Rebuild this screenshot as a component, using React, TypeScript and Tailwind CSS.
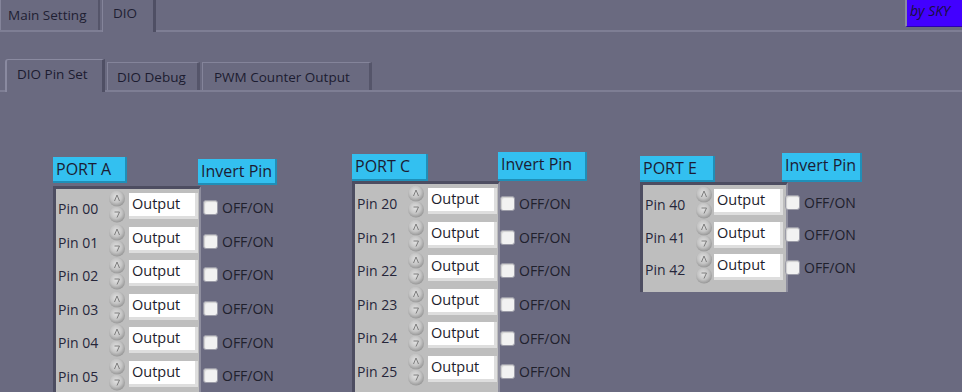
import React from 'react';

type Port = {
  name: string;
  pins: string[];
  wrap: string;
  col1: string;
  col2: string;
  nameBox: string;
  invertBox: string;
  boxGap: string;
  checkPad: string;
  rowH: string;
};

const PORTS: Port[] = [
  {
    name: 'PORT A',
    pins: ['00', '01', '02', '03', '04', '05'],
    wrap: 'ml-[53px] mt-[65px]',
    col1: 'w-[145px]',
    col2: 'w-[80px]',
    nameBox: 'w-[74px] h-[26px]',
    invertBox: 'w-[79px] h-[26px] mt-[2px]',
    boxGap: 'ml-[3px]',
    checkPad: 'pl-[5px] pt-[5px]',
    rowH: 'h-[33.6px]',
  },
  {
    name: 'PORT C',
    pins: ['20', '21', '22', '23', '24', '25'],
    wrap: 'ml-[74px] mt-[60px]',
    col1: 'w-[146px]',
    col2: 'w-[90px]',
    nameBox: 'w-[76px] h-[27px] mt-[2px]',
    invertBox: 'w-[89px] h-[29px]',
    boxGap: 'ml-[3px]',
    checkPad: 'pl-[2px] pt-[6px]',
    rowH: 'h-[33.6px]',
  },
  {
    name: 'PORT E',
    pins: ['40', '41', '42'],
    wrap: 'ml-[52px] mt-[61px]',
    col1: 'w-[142px]',
    col2: 'w-[80px]',
    nameBox: 'w-[75px] h-[26px] mt-[3px]',
    invertBox: 'w-[80px] h-[29px]',
    boxGap: 'ml-[1px]',
    checkPad: 'pl-[3px] pt-[4px]',
    rowH: 'h-[32.5px]',
  },
];

const Spinner: React.FC = () => (
  <svg width="18" height="33" viewBox="0 0 18 33" className="shrink-0 self-start">
    <defs>
      <radialGradient id="spg" cx="45%" cy="40%" r="65%">
        <stop offset="0%" stopColor="#e2e2e2" />
        <stop offset="55%" stopColor="#c4c4c4" />
        <stop offset="100%" stopColor="#8e8e8e" />
      </radialGradient>
    </defs>
    <ellipse cx="9" cy="8.5" rx="8" ry="8" fill="url(#spg)" />
    <ellipse cx="9" cy="24.5" rx="8" ry="8" fill="url(#spg)" />
    <path d="M6.5 11 L9 5 L11.5 11" fill="none" stroke="#7c7c7c" strokeWidth="1" />
    <path d="M6.5 22 L11.5 22 L9 27.5" fill="none" stroke="#7c7c7c" strokeWidth="1" />
  </svg>
);

const PortGroup: React.FC<{ port: Port }> = ({ port }) => (
  <div className={`${port.wrap} flex shrink-0`}>
    <div className={`${port.col1} flex flex-col`}>
      <div className="h-[29px] flex items-start">
        <div
          className={`${port.nameBox} bg-[#33c0f0] border-b-2 border-r-2 border-[#1f8fb8] text-[16px] leading-[24px] pl-[3px] text-[#1c1c34]`}
        >
          {port.name}
        </div>
      </div>
      <div className="w-[148px] bg-[#bebebe] border-l-[3px] border-t-[3px] border-[#4d4d61] border-r-2 border-r-[#8e8e9e] pt-[1px] pb-[8px]">
        {port.pins.map((p) => (
          <div key={p} className={`${port.rowH} flex items-start`}>
            <span className="w-[52px] pl-[2px] pt-[8px] text-[14px] text-[#26263a]">Pin {p}</span>
            <Spinner />
            <div
              className={`${port.boxGap} mt-[3px] w-[69px] h-[26px] bg-white border-b-[3px] border-r-[3px] border-[#dedede] text-[14.5px] leading-[21px] pl-[3px] text-[#1c1c2c]`}
            >
              Output
            </div>
          </div>
        ))}
      </div>
    </div>
    <div className={`${port.col2} flex flex-col`}>
      <div className="h-[29px] flex items-start">
        <div
          className={`${port.invertBox} bg-[#33c0f0] border-b-2 border-r-2 border-[#1f8fb8] text-[16px] leading-[24px] pl-[3px] text-[#1c1c34]`}
        >
          Invert Pin
        </div>
      </div>
      <div className={port.checkPad}>
        {port.pins.map((p) => (
          <div key={p} className={`${port.rowH} flex items-center gap-[4px]`}>
            <span className="w-[15px] h-[15px] rounded-[3px] bg-[#f2f2f2] border border-[#9c9ca8] shadow-[inset_1px_1px_1px_#cfcfcf]" />
            <span className="text-[14px] text-[#20202c]">OFF/ON</span>
          </div>
        ))}
      </div>
    </div>
  </div>
);

const App: React.FC = () => {
  return (
    <div
      className="w-[962px] h-[392px] overflow-hidden bg-[#6a6a80] text-[#1c1c30]"
      style={{ fontFamily: '"Open Sans", "Noto Sans", sans-serif' }}
    >
      {/* top tabs */}
      <div className="h-[32px] flex items-start border-b-2 border-[#7e7e94] relative">
        <div className="h-[30px] w-[100px] border-l border-[#84849a] border-r-2 border-r-[#55556a] text-[13.5px] leading-[30px] pl-[7px] text-[#1f1f33]">
          Main Setting
        </div>
        <div className="h-[32px] w-[54px] ml-[2px] -mb-[2px] bg-[#6a6a80] border-l border-[#84849a] border-r-[3px] border-r-[#4f4f64] text-[13.5px] leading-[26px] pl-[10px] text-[#1f1f33] z-10">
          DIO
        </div>
        <div className="flex-1" />
        <div className="w-[57px] h-[27px] bg-[#4200ff] border-l-2 border-[#8a8aa0] border-b border-b-[#2a00b0] italic text-[14px] leading-[22px] pl-[3px] text-[#1a1040]">
          by SKY
        </div>
      </div>

      {/* sub tabs */}
      <div className="mt-[28px] h-[32px] flex items-end border-b-2 border-[#7e7e94]">
        <div className="ml-[5px] h-[33px] w-[100px] -mb-[2px] bg-[#6a6a80] border-l-2 border-t border-[#8a8aa0] border-r-[3px] border-r-[#4f4f64] rounded-tl-[3px] text-[13.5px] leading-[28px] pl-[10px] z-10">
          DIO Pin Set
        </div>
        <div className="ml-[2px] h-[28px] w-[93px] border-l border-t border-[#84849a] border-r-[3px] border-r-[#55556a] text-[13.5px] leading-[28px] pl-[9px]">
          DIO Debug
        </div>
        <div className="ml-[2px] h-[28px] w-[170px] border-l border-t border-[#84849a] border-r-[3px] border-r-[#55556a] text-[13.5px] leading-[28px] pl-[11px]">
          PWM Counter Output
        </div>
      </div>

      {/* ports */}
      <div className="flex items-start">
        {PORTS.map((p) => (
          <PortGroup key={p.name} port={p} />
        ))}
      </div>
    </div>
  );
};

export default App;
